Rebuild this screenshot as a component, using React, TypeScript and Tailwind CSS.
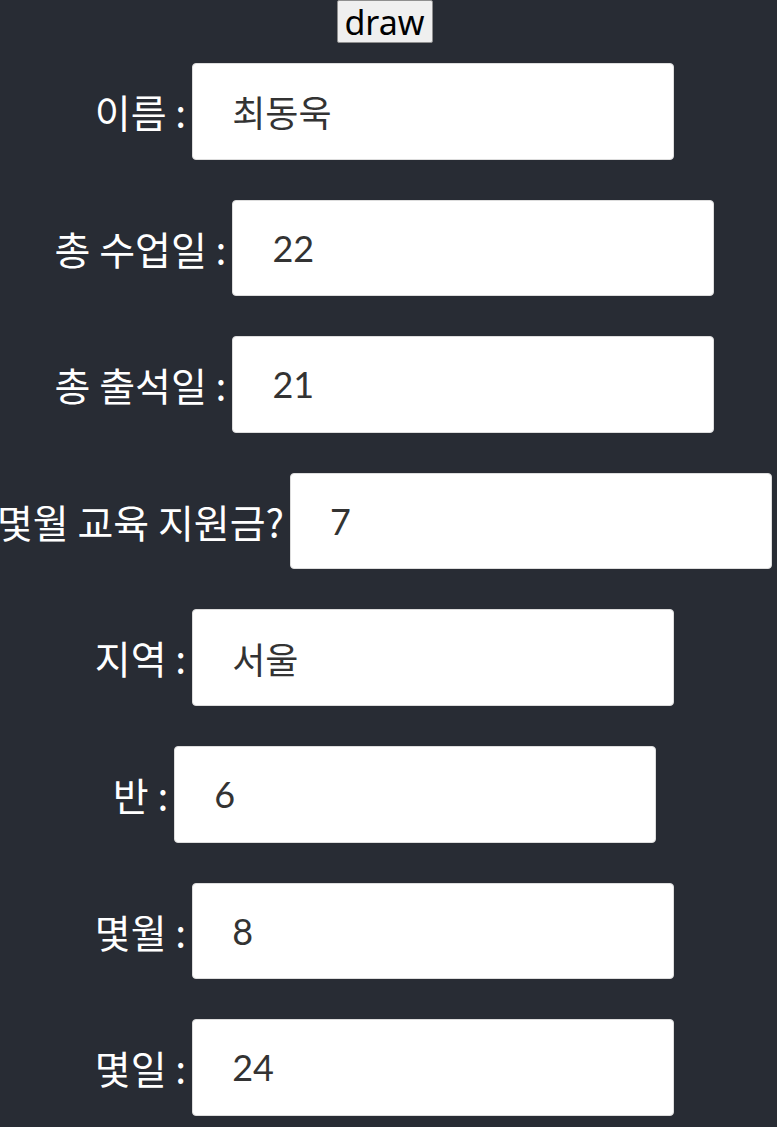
const fields = [
  { label: "이름 :", value: "최동욱" },
  { label: "총 수업일 :", value: "22" },
  { label: "총 출석일 :", value: "21" },
  { label: "몇월 교육 지원금?", value: "7" },
  { label: "지역 :", value: "서울" },
  { label: "반 :", value: "6" },
  { label: "몇월 :", value: "8" },
  { label: "몇일 :", value: "24" },
];

export default function App() {
  return (
    <div className="h-[1127px] w-full overflow-hidden bg-[#282c34]">
      <div className="flex w-[769px] flex-col items-center">
        <button className="h-[43px] w-[96px] rounded-[2px] border border-[#8f8f8f] bg-[#efefef] text-[34px] leading-none text-black font-['Noto_Sans',sans-serif]">
          draw
        </button>
        {fields.map((f) => (
          <div key={f.label} className="flex w-full items-center justify-center gap-[6px] py-[20px]">
            <span className="shrink-0 whitespace-nowrap text-[39px] text-white font-['Noto_Sans_CJK_KR',sans-serif]">
              {f.label}
            </span>
            <input
              readOnly
              defaultValue={f.value}
              className="h-[96.6px] w-[482px] shrink-0 rounded-[4px] border border-[#ddd] bg-white pl-[39px] text-[36px] text-[#333] outline-none font-['Lato','Noto_Sans_CJK_KR',sans-serif]"
            />
          </div>
        ))}
      </div>
    </div>
  );
}
